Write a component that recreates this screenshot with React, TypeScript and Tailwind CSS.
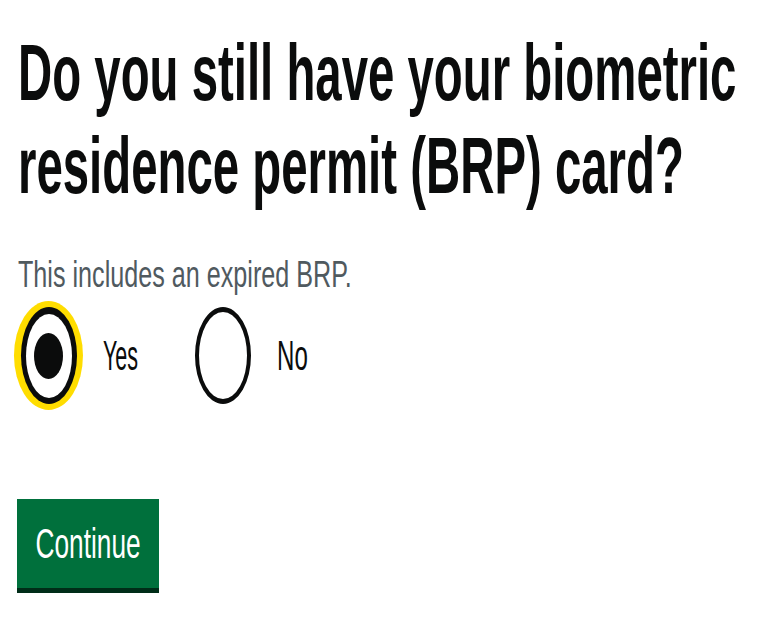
export default function App() {
  const font = { fontFamily: '"Liberation Sans", Arial, sans-serif' };
  return (
    <div className="w-[758px] h-[624px] bg-white overflow-hidden text-[#0b0c0c]" style={font}>
      <div className="pt-[26px] pl-[18px]">
        <h1 className="origin-left scale-x-[0.592] whitespace-nowrap text-[80px] leading-[93px] font-bold tracking-[0px]">
          Do you still have your biometric
          <br />
          residence permit (BRP) card?
        </h1>
        <p className="mt-[43px] origin-left scale-x-[0.68] whitespace-nowrap text-[37px] leading-[40px] text-[#505a5f]">
          This includes an expired BRP.
        </p>
      </div>
      <div className="mt-[6px] pl-[14px] flex items-center h-[109px]">
        <div className="w-[69px] h-[109px] rounded-[50%] bg-[#ffdd00] flex items-center justify-center">
          <div className="w-[56px] h-[97px] rounded-[50%] bg-[#0b0c0c] flex items-center justify-center">
            <div className="w-[46px] h-[84px] rounded-[50%] bg-white flex items-center justify-center">
              <div className="w-[29px] h-[46px] rounded-[50%] bg-[#0b0c0c]" />
            </div>
          </div>
        </div>
        <div className="ml-[20px] w-[92px] overflow-visible">
          <span className="block origin-left scale-x-[0.5] whitespace-nowrap text-[43px] leading-[43px]">Yes</span>
        </div>
        <div className="w-[56px] h-[97px] rounded-[50%] border-x-[4px] border-y-[5px] border-[#0b0c0c] bg-white" />
        <div className="ml-[26px]">
          <span className="block origin-left scale-x-[0.56] whitespace-nowrap text-[43px] leading-[43px]">No</span>
        </div>
      </div>
      <div className="mt-[89px] ml-[17px] w-[142px] h-[94px] bg-[#00703c] border-b-[5px] border-[#002d18] flex items-center justify-center overflow-visible">
        <span className="block origin-center scale-x-[0.625] whitespace-nowrap text-[42px] leading-[42px] text-white">Continue</span>
      </div>
    </div>
  );
}
